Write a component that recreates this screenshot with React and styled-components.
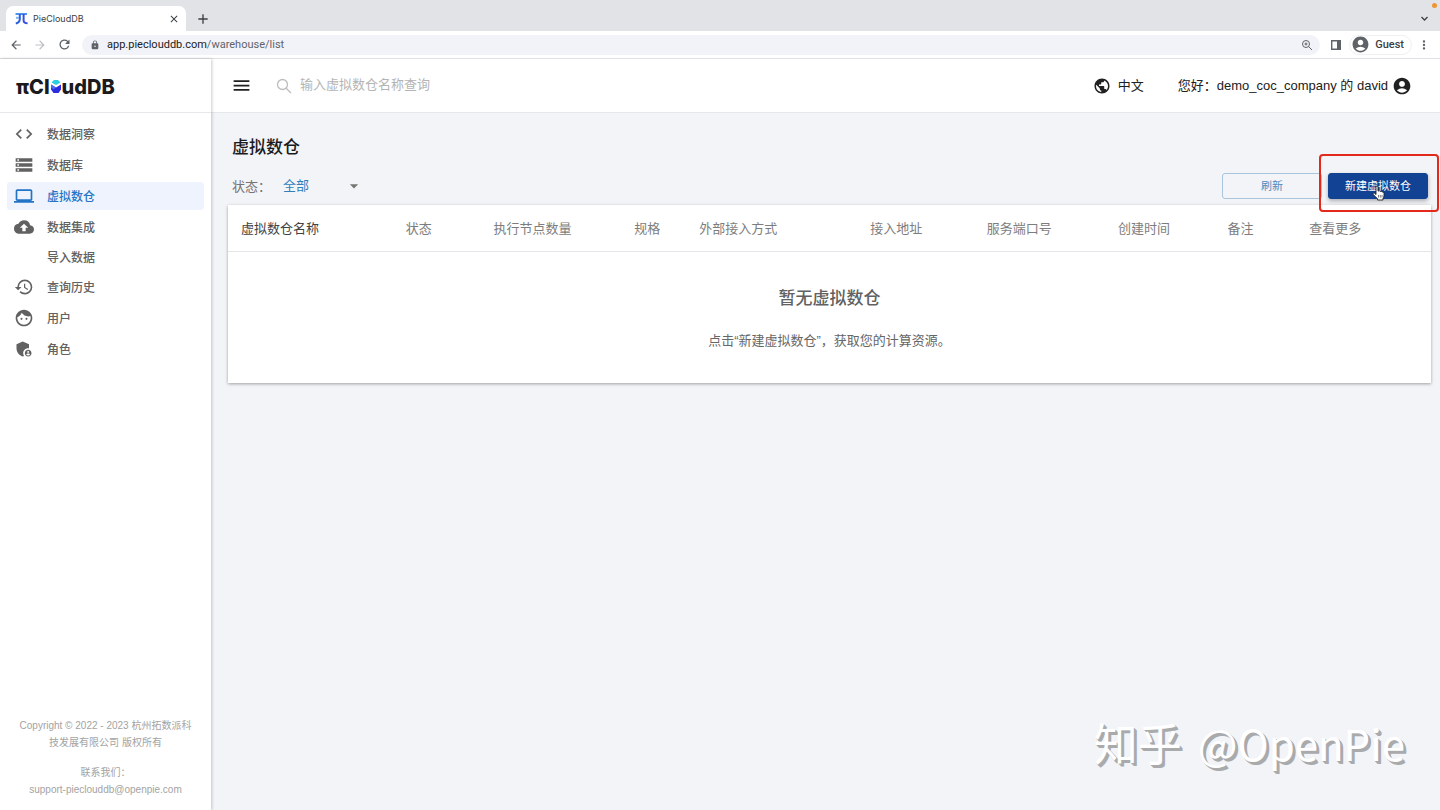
import styled, { createGlobalStyle } from 'styled-components';
import {
    MdCode, MdStorage, MdLaptop, MdBackup, MdHistory, MdFace, MdAdminPanelSettings,
    MdMenu, MdPublic, MdAccountCircle, MdArrowBack, MdArrowForward, MdRefresh, MdLock,
    MdMoreVert, MdAdd, MdClose, MdArrowDropDown,
} from 'react-icons/md';

const GlobalStyle = createGlobalStyle`
    * {
        box-sizing: border-box;
    }

    body {
        margin: 0;
        color: #212121;
        background-color: #F3F4F8;
        font-family: "Liberation Sans", "Noto Sans CJK SC", sans-serif;
        font-size: 13px;
    }

    button, input, select {
        font-family: inherit;
    }

    h1, h2, p {
        margin: 0;
    }
`;

const Screen = styled.div`
    position: relative;
    display: flex;
    flex-direction: column;
    min-height: 100vh;
    overflow: hidden;
`;

/* browser window */

const TabStrip = styled.div`
    position: relative;
    display: flex;
    align-items: flex-end;
    height: 31px;
    padding: 0 11px 0 6px;
    background-color: #E2E3E7;
    font-family: Inter, sans-serif;
`;

const Tab = styled.div`
    display: flex;
    align-items: center;
    width: 180px;
    height: 25px;
    padding: 0 6px 0 9px;
    border-radius: 7px 7px 0 0;
    background-color: white;
    color: #3C4043;
    font-size: 9px;
`;

const TabTitle = styled.span`
    flex: 1;
    margin-left: 5px;
`;

const IconButton = styled.button`
    display: flex;
    align-items: center;
    justify-content: center;
    padding: 0;
    border: none;
    background: none;
    color: ${(props) => props.$color || '#3C4043'};
    cursor: pointer;
`;

const NewTab = styled(IconButton)`
    margin-left: 9px;
    height: 25px;
`;

const TabSearch = styled(IconButton)`
    margin-left: auto;
    height: 25px;
`;

const RecordDot = styled.span`
    position: absolute;
    top: 3px;
    right: 3px;
    width: 5px;
    height: 5px;
    border-radius: 50%;
    background-color: #EE9433;
`;

const Toolbar = styled.div`
    display: flex;
    align-items: center;
    gap: 10px;
    height: 28px;
    padding: 0 9px;
    border-bottom: 1px solid #DFE0E3;
    background-color: white;
    font-family: Roboto, sans-serif;
    font-size: 11px;
`;

const AddressBar = styled.div`
    flex: 1;
    display: flex;
    align-items: center;
    height: 20px;
    padding: 0 7px 0 8px;
    border-radius: 10px;
    background-color: #F2F3F8;
    color: #5F6368;
`;

const Url = styled.span`
    flex: 1;
    margin-left: 7px;

    b {
        color: #202124;
        font-weight: 400;
    }
`;

const Guest = styled.button`
    display: flex;
    align-items: center;
    gap: 5px;
    height: 20px;
    margin: 0 -5px 0 -3px;
    padding: 0 7px 0 1px;
    border: 1px solid #F0F0F2;
    border-radius: 10px;
    background: white;
    color: #3C4043;
    font-size: 11px;
    font-weight: 500;
`;

/* application */

const Layout = styled.div`
    flex: 1;
    display: flex;
`;

const Sidebar = styled.aside`
    z-index: 1;
    display: flex;
    flex-direction: column;
    flex-shrink: 0;
    width: 211px;
    background-color: white;
    box-shadow: 1px 0 3px rgba(0, 0, 0, 0.2);
`;

const Logo = styled.a`
    display: flex;
    align-items: center;
    height: 54px;
    padding: 2px 16px 0;
    border-bottom: 1px solid #E6E7EA;
    color: #1B1A1C;
    font-family: Inter, sans-serif;
    font-size: 20px;
    font-weight: 800;
    text-decoration: none;
`;

const Nav = styled.nav`
    display: flex;
    flex-direction: column;
    gap: 3px;
    padding: 7px;
`;

const NavItem = styled.a`
    display: flex;
    align-items: center;
    height: ${(props) => (props.$sub ? '26px' : '28px')};
    padding-left: ${(props) => (props.$sub ? '40px' : '7px')};
    border-radius: 3px;
    background-color: ${(props) => (props.$active ? '#EEF3FD' : 'transparent')};
    color: ${(props) => (props.$active ? '#2474C6' : '#616161')};
    font-size: 12px;
    font-weight: 500;
    text-decoration: none;

    svg {
        margin-right: 13px;
    }
`;

const Label = styled.span`
    padding-bottom: 2px;
`;

const Footer = styled.footer`
    margin-top: auto;
    padding: 0 15px 12px;
    color: #A3A3A3;
    font-size: 10px;
    line-height: 17px;
    text-align: center;

    p + p {
        margin-top: 13px;
    }
`;

const Main = styled.main`
    flex: 1;
    min-width: 0;
`;

const Header = styled.header`
    display: flex;
    align-items: center;
    height: 54px;
    padding: 0 28px 0 20px;
    border-bottom: 1px solid #E6E7EA;
    background-color: white;
`;

const Search = styled.label`
    flex: 1;
    display: flex;
    align-items: center;
    gap: 8px;
    margin-left: 24px;
`;

const SearchInput = styled.input`
    flex: 1;
    padding: 0 0 2px;
    border: none;
    outline: none;
    font-size: 13px;

    &::placeholder {
        color: #B4B4B4;
    }
`;

const Language = styled.button`
    display: flex;
    align-items: center;
    gap: 7px;
    margin-right: 34px;
    padding: 0;
    border: none;
    background: none;
    color: #212121;
    font-size: 13px;
`;

const User = styled.button`
    display: flex;
    align-items: center;
    gap: 4px;
    padding: 0;
    border: none;
    background: none;
    color: #212121;
    font-size: 13px;
`;

const Content = styled.section`
    padding: 22px 9px 0 17px;
`;

const Title = styled.h1`
    padding-left: 4px;
    color: #1B1B1F;
    font-size: 17px;
    font-weight: 500;
    line-height: 25px;
`;

const Filters = styled.div`
    display: flex;
    align-items: center;
    margin-top: 13px;
    padding: 0 3px 0 4px;
    color: #757575;
`;

const StatusSelect = styled.div`
    display: flex;
    align-items: center;
    margin-left: 12px;

    select {
        width: 78px;
        padding: 0 0 2px;
        border: none;
        outline: none;
        appearance: none;
        background: none;
        color: #2F80BD;
        font-size: 13px;
    }

    svg {
        margin-left: -17px;
        color: #757575;
        pointer-events: none;
    }
`;

const Button = styled.button`
    width: 100px;
    height: 26px;
    padding: 0 0 2px;
    border: 1px solid ${(props) => (props.$primary ? '#124294' : '#A9C4DD')};
    border-radius: 3px;
    background-color: ${(props) => (props.$primary ? '#124294' : 'transparent')};
    box-shadow: ${(props) => (props.$primary ? '0 2px 4px rgba(0, 0, 0, 0.3)' : 'none')};
    color: ${(props) => (props.$primary ? 'white' : '#4A8CBF')};
    font-size: 11px;
    cursor: pointer;
`;

const Actions = styled.div`
    display: flex;
    gap: 6px;
    margin-left: auto;
`;

const CreateAction = styled.div`
    position: relative;
`;

const Highlight = styled.span`
    position: absolute;
    top: -19px;
    right: -11px;
    bottom: -13px;
    left: -9px;
    border: 2px solid #E2291C;
    border-radius: 4px;
    pointer-events: none;
`;

const Pointer = styled.svg`
    position: absolute;
    top: 12px;
    left: 44px;
    pointer-events: none;
`;

const Table = styled.table`
    width: 100%;
    margin-top: 6px;
    border-collapse: collapse;
    table-layout: fixed;
    background-color: white;
    box-shadow: 0 1px 3px rgba(0, 0, 0, 0.35);
`;

const HeadCell = styled.th`
    width: ${(props) => props.$width};
    height: 46px;
    padding: 0 0 0 13px;
    border-bottom: 1px solid #E4E5E8;
    color: ${(props) => (props.$sorted ? '#424242' : '#7D7D7D')};
    font-size: 13px;
    font-weight: 400;
    text-align: left;
    white-space: nowrap;
`;

const Empty = styled.td`
    height: 132px;
    padding: 2px 0 0;
    color: #666666;
    text-align: center;

    h2 {
        color: #616161;
        font-size: 17px;
        font-weight: 500;
        line-height: 25px;
    }

    p {
        margin-top: 20px;
        line-height: 20px;
    }
`;

const Watermark = styled.div`
    position: absolute;
    right: 35px;
    bottom: 37px;
    display: flex;
    align-items: baseline;
    gap: 16px;
    color: white;
    font-family: "Noto Sans CJK SC", sans-serif;
    font-size: 44px;
    line-height: 60px;
    text-shadow: 1px 1px 0 #A9AAAC, 2px 2px 0 #A9AAAC, 3px 3px 0 #A9AAAC;
    pointer-events: none;
`;

const Handle = styled.span`
    font-size: 42px;
`;

const navItems = [
    { name: '数据洞察', icon: MdCode },
    { name: '数据库', icon: MdStorage },
    { name: '虚拟数仓', icon: MdLaptop, active: true },
    { name: '数据集成', icon: MdBackup },
    { name: '导入数据', sub: true },
    { name: '查询历史', icon: MdHistory },
    { name: '用户', icon: MdFace },
    { name: '角色', icon: MdAdminPanelSettings },
];

const columns = [
    { name: '虚拟数仓名称', width: '13.7%' },
    { name: '状态', width: '7.3%' },
    { name: '执行节点数量', width: '11.7%' },
    { name: '规格', width: '5.4%' },
    { name: '外部接入方式', width: '14.2%' },
    { name: '接入地址', width: '9.7%' },
    { name: '服务端口号', width: '10.9%' },
    { name: '创建时间', width: '9.1%' },
    { name: '备注', width: '6.8%' },
    { name: '查看更多', width: '11.2%' },
];

function Favicon() {
    return (
        <svg width="13" height="13" viewBox="0 0 13 13" fill="none" strokeWidth="2">
            <path d="M0.500 2h11.500" stroke="#4E95F2" />
            <path d="M4.800 2v5q0 3.500-4 4.500" stroke="#2A62DC" />
            <path d="M1 5.800h3" stroke="#7FB2F5" />
            <path d="M8.600 2v6.500q0 2.800 4 2.800" stroke="#3B4FE0" />
        </svg>
    );
}

function LogoMark() {
    return (
        <svg width="12" height="15" viewBox="0 0 12 15">
            <path d="M1.500 3.500L4 1h4l2.500 2.500L6 6z" fill="#2CCFDF" />
            <path d="M1 5.500l5 3 5-3v5L8.500 14h-5L1 10.500z" fill="#2B2BE0" />
            <path d="M1 5.500l5 3-2.500 2L1 8.500z" fill="#4C6CF0" />
        </svg>
    );
}

function Browser() {
    return (
        <>
            <TabStrip>
                <Tab>
                    <Favicon />
                    <TabTitle>PieCloudDB</TabTitle>
                    <IconButton aria-label="Close tab"><MdClose size={12} /></IconButton>
                </Tab>
                <NewTab aria-label="New tab"><MdAdd size={16} /></NewTab>
                <TabSearch aria-label="Search tabs">
                    <svg width="9" height="9" viewBox="0 0 9 9" fill="none" stroke="currentColor" strokeWidth="1.300">
                        <path d="M1.500 3l3 3 3-3" />
                    </svg>
                </TabSearch>
                <RecordDot />
            </TabStrip>
            <Toolbar>
                <IconButton aria-label="Back" $color="#5F6368"><MdArrowBack size={14} /></IconButton>
                <IconButton aria-label="Forward" $color="#BDC1C6"><MdArrowForward size={14} /></IconButton>
                <IconButton aria-label="Reload" $color="#5F6368"><MdRefresh size={15} /></IconButton>
                <AddressBar>
                    <MdLock size={10} />
                    <Url><b>app.pieclouddb.com</b>/warehouse/list</Url>
                    <svg width="12" height="12" viewBox="0 0 12 12" fill="none" stroke="currentColor">
                        <circle cx="5" cy="5" r="3.500" />
                        <path d="M7.500 7.500l3.500 3.500M3.500 5h3M5 3.500v3" />
                    </svg>
                </AddressBar>
                <IconButton aria-label="Side panel" $color="#5F6368">
                    <svg width="12" height="12" viewBox="0 0 12 12">
                        <path d="M1.700 1.700h8.600v8.600H1.700z" fill="none" stroke="currentColor" strokeWidth="1.400" />
                        <path d="M7 1h4v10H7z" fill="currentColor" />
                    </svg>
                </IconButton>
                <Guest><MdAccountCircle size={19} color="#5F6368" />Guest</Guest>
                <IconButton aria-label="Menu" $color="#5F6368"><MdMoreVert size={14} /></IconButton>
            </Toolbar>
        </>
    );
}

export default function App() {

    const links = navItems.map((item) => {
        const Icon = item.icon;
        return <NavItem key={item.name} href="#" $active={item.active} $sub={item.sub}>
                {Icon && <Icon size={20} />}
                <Label>{item.name}</Label>
            </NavItem>
    });

    return (
        <Screen>
            <GlobalStyle />
            <Browser />

            <Layout>
                <Sidebar>
                    <Logo href="#">πCl<LogoMark />udDB</Logo>
                    <Nav>{links}</Nav>
                    <Footer>
                        <p>Copyright © 2022 - 2023 杭州拓数派科技发展有限公司 版权所有</p>
                        <p>联系我们：<br />support-pieclouddb@openpie.com</p>
                    </Footer>
                </Sidebar>

                <Main>
                    <Header>
                        <IconButton aria-label="菜单" $color="#212121"><MdMenu size={21} /></IconButton>
                        <Search>
                            <svg width="16" height="16" viewBox="0 0 16 16" fill="none" stroke="#BDBDBD" strokeWidth="1.300">
                                <circle cx="6.500" cy="6.500" r="5" />
                                <path d="M10.200 10.200l4.800 4.800" />
                            </svg>
                            <SearchInput type="text" placeholder="输入虚拟数仓名称查询" />
                        </Search>
                        <Language><MdPublic size={18} /><Label>中文</Label></Language>
                        <User><Label>您好：demo_coc_company 的 david</Label><MdAccountCircle size={20} /></User>
                    </Header>

                    <Content>
                        <Title>虚拟数仓</Title>
                        <Filters>
                            <Label as="label" htmlFor="status">状态：</Label>
                            <StatusSelect>
                                <select id="status">
                                    <option>全部</option>
                                </select>
                                <MdArrowDropDown size={20} />
                            </StatusSelect>
                            <Actions>
                                <Button>刷新</Button>
                                <CreateAction>
                                    <Button $primary>新建虚拟数仓</Button>
                                    <Highlight />
                                    <Pointer width="13" height="16" viewBox="0 0 13 16">
                                        <path
                                            d="M4 9.500V2.200q0-1.200 1-1.200t1 1.200V6q2-.8 2.300.5 1.700-.6 2 .6 1.700-.3 1.700 1.200v2.200q0 1.800-1 3V15H5.500v-1.300L1.200 9.600q-.6-1 .3-1.400T4 9.500z"
                                            fill="white"
                                            stroke="#222222"
                                            strokeWidth="0.900"
                                        />
                                        <path d="M6.500 10v2.500M8.300 10v2.500M10 10v2.500" stroke="#222222" strokeWidth="0.600" />
                                    </Pointer>
                                </CreateAction>
                            </Actions>
                        </Filters>

                        <Table>
                            <thead>
                                <tr>
                                    {columns.map((column, index) => (
                                        <HeadCell key={column.name} $width={column.width} $sorted={index === 0}>
                                            {column.name}
                                        </HeadCell>
                                    ))}
                                </tr>
                            </thead>
                            <tbody>
                                <tr>
                                    <Empty colSpan={columns.length}>
                                        <h2>暂无虚拟数仓</h2>
                                        <p>点击“新建虚拟数仓”，获取您的计算资源。</p>
                                    </Empty>
                                </tr>
                            </tbody>
                        </Table>
                    </Content>
                </Main>
            </Layout>

            <Watermark>知乎<Handle>@OpenPie</Handle></Watermark>
        </Screen>
    );
}
